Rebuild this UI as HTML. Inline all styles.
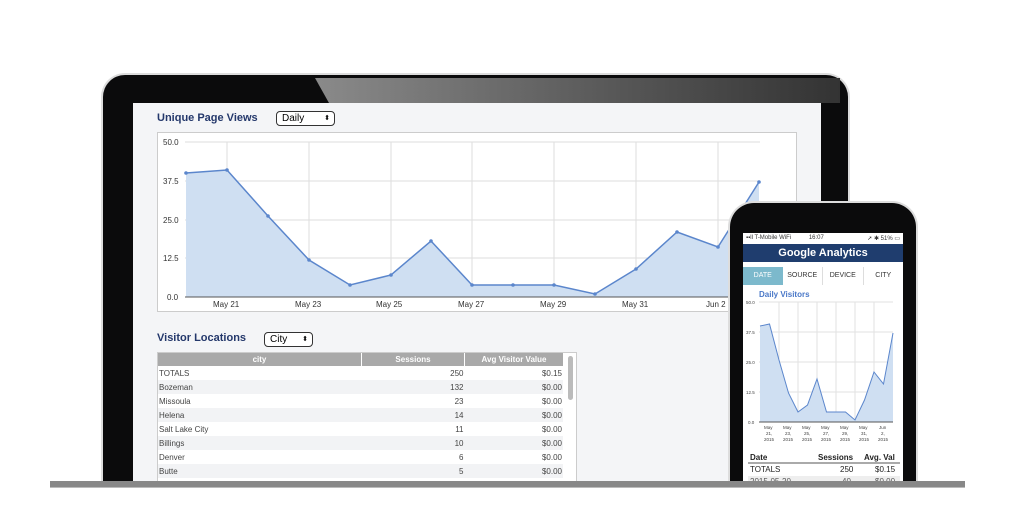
<!DOCTYPE html><html><head><style>
body{margin:0;width:1024px;height:505px;background:#fff;position:relative;overflow:hidden;font-family:"Liberation Sans",sans-serif}
.a{position:absolute}
.t{font-size:8px;color:#333}
table{border-collapse:collapse;font-size:8px;color:#444}
</style></head><body>
<div class="a" style="left:103px;top:75px;width:745px;height:420px;background:#0b0b0c;border-radius:22px 22px 0 0;box-shadow:0 0 0 2px #ddd"></div>
<div class="a" style="left:315px;top:78px;width:525px;height:25px;background:linear-gradient(90deg,#8a8a8a,#555 60%,#333);clip-path:polygon(0 0,100% 0,100% 100%,14px 100%)"></div>
<div class="a" style="left:133px;top:103px;width:688px;height:382px;background:#f4f5f7"></div>
<div class="a" style="left:157px;top:112px;font-size:11px;font-weight:bold;color:#24386b">Unique Page Views</div>
<div class="a" style="left:276px;top:111px;width:52px;height:13px;border:1px solid #333;border-radius:4px;background:#fff;font-size:10px;line-height:13px;padding-left:5px;box-sizing:content-box">Daily<span style="position:absolute;right:4px;font-size:7px">⬍</span></div>
<div class="a" style="left:157px;top:132px;width:638px;height:178px;background:#fff;border:1px solid #ccc"></div>
<svg class="a" style="left:0;top:0" width="1024" height="505">
<g stroke="#ddd" stroke-width="1">
<line x1="185" y1="142" x2="760" y2="142"/><line x1="185" y1="181" x2="760" y2="181"/><line x1="185" y1="220" x2="760" y2="220"/><line x1="185" y1="258" x2="760" y2="258"/>
<line x1="227" y1="142" x2="227" y2="297"/><line x1="309" y1="142" x2="309" y2="297"/><line x1="391" y1="142" x2="391" y2="297"/><line x1="472" y1="142" x2="472" y2="297"/><line x1="554" y1="142" x2="554" y2="297"/><line x1="636" y1="142" x2="636" y2="297"/><line x1="718" y1="142" x2="718" y2="297"/>
</g>
<polygon fill="#cfdff2" points="186,297 186,173 227,170 268,216 309,260 350,285 391,275 431,241 472,285 513,285 554,285 595,294 636,269 677,232 718,247 759,182 759,297"/>
<polyline fill="none" stroke="#5b86cc" stroke-width="1.5" points="186,173 227,170 268,216 309,260 350,285 391,275 431,241 472,285 513,285 554,285 595,294 636,269 677,232 718,247 759,182"/>
<g fill="#5b86cc"><circle cx="186" cy="173" r="1.8"/><circle cx="227" cy="170" r="1.8"/><circle cx="268" cy="216" r="1.8"/><circle cx="309" cy="260" r="1.8"/><circle cx="350" cy="285" r="1.8"/><circle cx="391" cy="275" r="1.8"/><circle cx="431" cy="241" r="1.8"/><circle cx="472" cy="285" r="1.8"/><circle cx="513" cy="285" r="1.8"/><circle cx="554" cy="285" r="1.8"/><circle cx="595" cy="294" r="1.8"/><circle cx="636" cy="269" r="1.8"/><circle cx="677" cy="232" r="1.8"/><circle cx="718" cy="247" r="1.8"/><circle cx="759" cy="182" r="1.8"/></g>
<line x1="185" y1="297" x2="760" y2="297" stroke="#555"/>
<g font-size="8" fill="#333" font-family="Liberation Sans">
<text x="163" y="145">50.0</text><text x="163" y="184">37.5</text><text x="163" y="223">25.0</text><text x="163" y="261">12.5</text><text x="167" y="300">0.0</text>
<text x="213" y="307">May 21</text><text x="295" y="307">May 23</text><text x="376" y="307">May 25</text><text x="458" y="307">May 27</text><text x="540" y="307">May 29</text><text x="622" y="307">May 31</text><text x="706" y="307">Jun 2</text>
</g></svg>
<div class="a" style="left:157px;top:332px;font-size:11px;font-weight:bold;color:#24386b">Visitor Locations</div>
<div class="a" style="left:264px;top:332px;width:42px;height:13px;border:1px solid #333;border-radius:4px;background:#fff;font-size:10px;line-height:13px;padding-left:5px">City<span style="position:absolute;right:4px;font-size:7px">⬍</span></div>
<div class="a" style="left:157px;top:352px;width:418px;height:135px;border:1px solid #ccc;background:#fff;overflow:hidden">
<table style="width:405px">
<tr style="background:#a9a9a9;color:#fff;font-weight:bold;height:13px"><td style="text-align:center;width:201px">city</td><td style="text-align:center;width:100px;border-left:1px solid #fff">Sessions</td><td style="text-align:center;border-left:1px solid #fff">Avg Visitor Value</td></tr>
<tr style="height:14px"><td>TOTALS</td><td align="right">250</td><td align="right">$0.15</td></tr>
<tr style="height:14px;background:#f2f3f5"><td>Bozeman</td><td align="right">132</td><td align="right">$0.00</td></tr>
<tr style="height:14px"><td>Missoula</td><td align="right">23</td><td align="right">$0.00</td></tr>
<tr style="height:14px;background:#f2f3f5"><td>Helena</td><td align="right">14</td><td align="right">$0.00</td></tr>
<tr style="height:14px"><td>Salt Lake City</td><td align="right">11</td><td align="right">$0.00</td></tr>
<tr style="height:14px;background:#f2f3f5"><td>Billings</td><td align="right">10</td><td align="right">$0.00</td></tr>
<tr style="height:14px"><td>Denver</td><td align="right">6</td><td align="right">$0.00</td></tr>
<tr style="height:14px;background:#f2f3f5"><td>Butte</td><td align="right">5</td><td align="right">$0.00</td></tr>
</table>
<div class="a" style="right:3px;top:3px;width:5px;height:44px;background:#bbb;border-radius:3px"></div>
</div>
<div class="a" style="left:730px;top:203px;width:186px;height:300px;background:#0b0b0c;border-radius:24px 24px 0 0;box-shadow:0 0 0 2px #ddd"></div>
<div class="a" style="left:743px;top:233px;width:160px;height:252px;background:#fff;overflow:hidden">
<div class="a t" style="left:3px;top:2px;font-size:6px;width:154px">▪▪ll T-Mobile WiFi <span style="margin-left:16px">16:07</span><span style="float:right">➚ ✱ 51% ▭</span></div>
<div class="a" style="left:0;top:11px;width:160px;height:18px;background:#1f3d6e;color:#fff;font-weight:bold;font-size:11px;text-align:center;line-height:18px">Google Analytics</div>
<div class="a" style="left:0;top:34px;width:160px;height:18px;display:flex;font-size:7px;line-height:18px;text-align:center;color:#333">
<div style="flex:1;background:#7cb9cc;color:#fff">DATE</div><div style="flex:1;border-right:1px solid #ddd">SOURCE</div><div style="flex:1;border-right:1px solid #ddd">DEVICE</div><div style="flex:1">CITY</div></div>
<div class="a" style="left:16px;top:57px;font-size:8px;font-weight:bold;color:#4a78c8">Daily Visitors</div>
</div>
<svg class="a" style="left:0;top:0" width="1024" height="505">
<g stroke="#e2e2e2"><line x1="759" y1="302" x2="893" y2="302"/><line x1="759" y1="332" x2="893" y2="332"/><line x1="759" y1="362" x2="893" y2="362"/><line x1="759" y1="392" x2="893" y2="392"/>
<line x1="779" y1="302" x2="779" y2="422"/><line x1="798" y1="302" x2="798" y2="422"/><line x1="817" y1="302" x2="817" y2="422"/><line x1="836" y1="302" x2="836" y2="422"/><line x1="855" y1="302" x2="855" y2="422"/><line x1="874" y1="302" x2="874" y2="422"/></g>
<polygon fill="#cfdff2" points="760,422 760,326 769.5,324 779,360 788.5,393 798,412 807.5,405 817,379 826.5,412 836,412 845.5,412 855,420 864.5,400 874,372 883.5,384 893,333 893,422"/>
<polyline fill="none" stroke="#5b86cc" stroke-width="1" points="760,326 769.5,324 779,360 788.5,393 798,412 807.5,405 817,379 826.5,412 836,412 845.5,412 855,420 864.5,400 874,372 883.5,384 893,333"/>
<line x1="759" y1="422" x2="893" y2="422" stroke="#555"/>
<g font-size="4.5" fill="#444" font-family="Liberation Sans">
<text x="746" y="304">50.0</text><text x="746" y="334">37.5</text><text x="746" y="364">25.0</text><text x="746" y="394">12.5</text><text x="748" y="424">0.0</text>
<text x="764" y="429">May</text><text x="766" y="435">21,</text><text x="764" y="441">2015</text>
<text x="783" y="429">May</text><text x="785" y="435">23,</text><text x="783" y="441">2015</text>
<text x="802" y="429">May</text><text x="804" y="435">25,</text><text x="802" y="441">2015</text>
<text x="821" y="429">May</text><text x="823" y="435">27,</text><text x="821" y="441">2015</text>
<text x="840" y="429">May</text><text x="842" y="435">29,</text><text x="840" y="441">2015</text>
<text x="859" y="429">May</text><text x="861" y="435">31,</text><text x="859" y="441">2015</text>
<text x="879" y="429">Jun</text><text x="881" y="435">2,</text><text x="878" y="441">2015</text>
</g>
<g font-family="Liberation Sans" fill="#222"><text x="750" y="460" font-size="8" font-weight="bold">Date</text><text x="818" y="460" font-size="8" font-weight="bold">Sessions</text><text x="864" y="460" font-size="8" font-weight="bold">Avg. Val</text>
<line x1="748" y1="463" x2="900" y2="463" stroke="#aaa" stroke-width="2"/>
<text x="750" y="472" font-size="8">TOTALS</text><text x="840" y="472" font-size="8">250</text><text x="875" y="472" font-size="8">$0.15</text>
<rect x="748" y="476" width="152" height="9" fill="#eee"/><text x="750" y="484" font-size="8" fill="#555">2015-05-20</text><text x="842" y="484" font-size="8" fill="#555">40</text><text x="875" y="484" font-size="8" fill="#555">$0.00</text></g>
</svg>
<div class="a" style="left:50px;top:481px;width:915px;height:6px;background:#888;border-bottom:1px solid #bbb"></div>
<div class="a" style="left:0;top:488px;width:1024px;height:17px;background:#fff"></div>
</body></html>
